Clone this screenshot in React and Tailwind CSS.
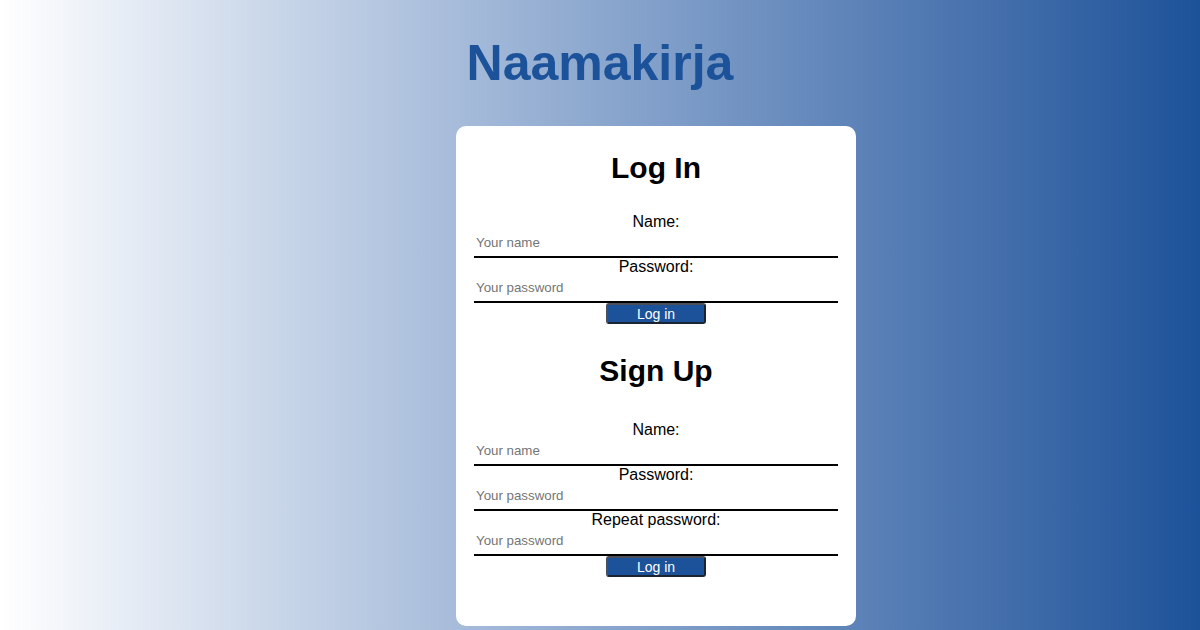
import React from "react";

function Field({ label, placeholder, type = "text" }) {
  return (
    <>
      <label className="block text-center text-[16px] leading-[18px]">{label}</label>
      <input
        type={type}
        placeholder={placeholder}
        className="block h-[27px] w-full border-b-2 border-black bg-transparent px-[2px] pb-[2px] text-[13.3px] outline-none placeholder:text-[#757575]"
      />
    </>
  );
}

function Submit() {
  return (
    <div className="flex justify-center">
      <button className="h-[21px] w-[100px] rounded-[3px] border-2 border-[#4a4f5a] border-b-[#1b2433] border-r-[#1b2433] bg-[#1c5299] text-[14px] leading-none text-white">
        Log in
      </button>
    </div>
  );
}

export default function App() {
  return (
    <div className="h-[630px] w-[1200px] overflow-hidden bg-gradient-to-r from-white to-[#1c5299] font-['Liberation_Sans',Arial,sans-serif] text-black">
      <h1 className="pt-[35px] text-center text-[50px] font-bold leading-[56px] text-[#1c5299]">
        Naamakirja
      </h1>
      <div className="mt-[35px] flex justify-center pl-[112px]">
        <form className="h-[500px] w-[400px] rounded-[10px] bg-white px-[18px] pt-[25px]">
          <h2 className="text-center text-[30px] font-bold leading-[34px]">Log In</h2>
          <div className="mt-[28px]">
            <Field label="Name:" placeholder="Your name" />
            <Field label="Password:" placeholder="Your password" type="password" />
            <Submit />
          </div>
          <h2 className="mt-[30px] text-center text-[30px] font-bold leading-[34px]">Sign Up</h2>
          <div className="mt-[33px]">
            <Field label="Name:" placeholder="Your name" />
            <Field label="Password:" placeholder="Your password" type="password" />
            <Field label="Repeat password:" placeholder="Your password" type="password" />
            <Submit />
          </div>
        </form>
      </div>
    </div>
  );
}
